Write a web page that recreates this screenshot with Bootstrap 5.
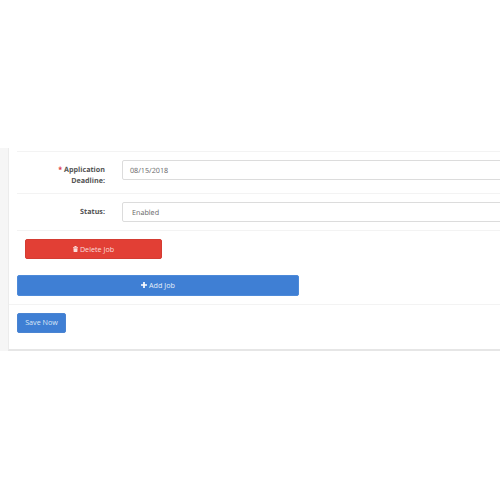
<!DOCTYPE html>
<html lang="en">
<head>
<meta charset="utf-8">
<title>Job form</title>
<link href="https://cdn.jsdelivr.net/npm/bootstrap@5.3.0/dist/css/bootstrap.min.css" rel="stylesheet">
<style>
html,body{height:500px;overflow:hidden;background:#fff}
body{font-family:"Open Sans","Liberation Sans",sans-serif;font-size:7.2px;color:#555;padding-top:148px;text-rendering:geometricPrecision}
.shell{background:#f6f6f6;padding-left:8px;height:203px;width:500px}
.sheet{background:#fff;border-left:1px solid #ececec;border-bottom:2px solid #e6e6e6;height:203px;padding-left:8px;width:492px;overflow:hidden}
.frow{display:flex;border-top:1px solid #f3f3f3}
.frow-a{margin-top:3px;height:42px;padding-top:8px}
.frow-b{height:37px;padding-top:8px}
.flabel{width:88px;text-align:right;font-weight:700;color:#555;line-height:10.5px;flex:none;font-size:7.2px;margin-right:17px;padding-top:5px}
.fbox{width:400px;flex:none;height:20px;border:1px solid #dcdcdc;border-radius:2px;background:#fff;font-size:7.2px;color:#666;line-height:20px;padding:0 7px}
.frow-b .fbox{padding-left:9px}
.btn.act{font-size:7.2px;line-height:10px;color:#fff;border-radius:2px;border-width:1px;display:flex;align-items:center;justify-content:center;gap:2px;padding:0 0 2px}
.btn.act-del{width:137px;height:20px;background:#e23f35;border-color:#d43c32;margin-left:8px;margin-top:8px;color:#fbdcd9;padding-bottom:0}
.btn.act-add{width:282px;height:21px;background:#3f7fd4;border-color:#4d8ad9;margin-top:16px;color:#e6effa}
.divide{border-top:1px solid #f3f3f3;margin-top:8px;margin-left:-8px;padding:8px 0 0 8px}
.btn.act-save{width:49px;height:20px;background:#3f7fd4;border-color:#4a84d2;color:#dbe7f7}
</style>
</head>
<body>
<div class="shell">
  <div class="sheet">
    <form>
      <div class="frow frow-a">
        <div class="flabel"><span class="text-danger">*</span> Application<br>Deadline:</div>
        <div class="fbox">08/15/2018</div>
      </div>
      <div class="frow frow-b">
        <div class="flabel">Status:</div>
        <div class="fbox">Enabled</div>
      </div>
      <div class="border-top" style="--bs-border-color:#f3f3f3">
        <button type="button" class="btn act act-del">
          <svg width="5" height="6" viewBox="0 0 12 14" aria-hidden="true"><path fill="currentColor" d="M4 0h4l1 2h3v2H0V2h3zM1 5h10l-.6 9H1.6z"/></svg>
          Delete Job
        </button>
      </div>
      <button type="button" class="btn act act-add">
        <svg width="6" height="6" viewBox="0 0 10 10" aria-hidden="true"><path fill="#fff" d="M3.6 0h2.8v3.6H10v2.8H6.4V10H3.6V6.4H0V3.6h3.6z"/></svg>
        Add Job
      </button>
      <div class="divide">
        <button type="button" class="btn act act-save">Save Now</button>
      </div>
    </form>
  </div>
</div>
<script src="https://cdn.jsdelivr.net/npm/bootstrap@5.3.0/dist/js/bootstrap.bundle.min.js"></script>
</body>
</html>
